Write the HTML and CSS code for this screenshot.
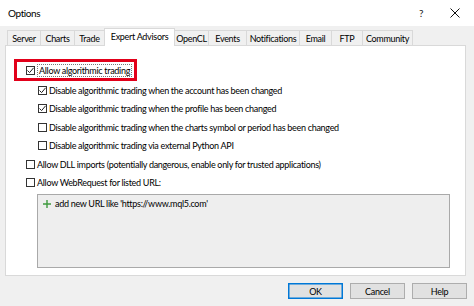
FILE: index.html
```html
<!DOCTYPE html>
<html>
<head>
<meta charset="utf-8">
<link rel="stylesheet" href="styles.css">
</head>
<body>
<div class="window">
  <div class="titlebar">
    <span class="title">Options</span>
    <div class="caption">
      <span class="cap-btn cap-help">?</span>
      <span class="cap-btn"><svg width="10" height="10" viewBox="0 0 10 10"><path d="M0.5 0.5L9.5 9.5M9.5 0.5L0.5 9.5" stroke="#111" stroke-width="1" fill="none"/></svg></span>
    </div>
  </div>
  <div class="main">
    <div class="tabs">
      <div class="tab">Server</div>
      <div class="tab">Charts</div>
      <div class="tab">Trade</div>
      <div class="tab active">Expert Advisors</div>
      <div class="tab">OpenCL</div>
      <div class="tab">Events</div>
      <div class="tab">Notifications</div>
      <div class="tab">Email</div>
      <div class="tab">FTP</div>
      <div class="tab">Community</div>
    </div>
    <div class="panel">
      <div class="highlight">
        <div class="row">
          <span class="cb"><svg width="9" height="9" viewBox="0 0 9 9"><path d="M1.5 4.5L3.6 6.6L7.6 1.8" stroke="#222" stroke-width="1" fill="none"/></svg></span>
          <span class="label focus">Allow algorithmic trading</span>
        </div>
      </div>
      <div class="row sub">
        <span class="cb"><svg width="9" height="9" viewBox="0 0 9 9"><path d="M1.5 4.5L3.6 6.6L7.6 1.8" stroke="#222" stroke-width="1" fill="none"/></svg></span>
        <span class="label">Disable algorithmic trading when the account has been changed</span>
      </div>
      <div class="row sub">
        <span class="cb"><svg width="9" height="9" viewBox="0 0 9 9"><path d="M1.5 4.5L3.6 6.6L7.6 1.8" stroke="#222" stroke-width="1" fill="none"/></svg></span>
        <span class="label">Disable algorithmic trading when the profile has been changed</span>
      </div>
      <div class="row sub">
        <span class="cb"></span>
        <span class="label">Disable algorithmic trading when the charts symbol or period has been changed</span>
      </div>
      <div class="row sub">
        <span class="cb"></span>
        <span class="label">Disable algorithmic trading via external Python API</span>
      </div>
      <div class="row top">
        <span class="cb"></span>
        <span class="label">Allow DLL imports (potentially dangerous, enable only for trusted applications)</span>
      </div>
      <div class="row top">
        <span class="cb"></span>
        <span class="label">Allow WebRequest for listed URL:</span>
      </div>
      <div class="urlbox">
        <div class="url-row">
          <svg class="plus" width="8" height="8" viewBox="0 0 8 8"><path d="M4 0V8M0 4H8" stroke="#3f9b3f" stroke-width="1.4" fill="none"/></svg>
          <span>add new URL like 'https://www.mql5.com'</span>
        </div>
      </div>
    </div>
    <div class="buttons">
      <div class="btn default">OK</div>
      <div class="btn">Cancel</div>
      <div class="btn">Help</div>
    </div>
  </div>
</div>
</body>
</html>
```
FILE: styles.css
```css
* { box-sizing: border-box; }
html, body { margin: 0; padding: 0; }
body {
  width: 474px;
  height: 306px;
  overflow: hidden;
  background: #f0f0f0;
  font-family: Lato, "Noto Sans", sans-serif;
  font-size: 9px;
  letter-spacing: -0.3px;
  color: #000;
}
.window { width: 474px; height: 306px; }
.titlebar {
  height: 26px;
  background: #fff;
  display: flex;
  align-items: center;
  justify-content: space-between;
  padding-left: 8px;
  padding-right: 2px;
}
.title { font-size: 10px; letter-spacing: -0.4px; }
.caption { display: flex; align-items: center; height: 100%; }
.cap-btn {
  width: 34px;
  height: 100%;
  display: flex;
  align-items: center;
  justify-content: center;
}
.cap-help { font-size: 10px; color: #222; }
.main { padding: 2px 8px 0 5px; }
.tabs {
  display: flex;
  align-items: flex-end;
  height: 17px;
  margin-left: 2px;
}
.tab {
  height: 15px;
  border: 1px solid #d9d9d9;
  border-bottom: none;
  background: #f0f0f0;
  margin-left: -1px;
  display: flex;
  align-items: center;
  justify-content: center;
  white-space: nowrap;
}
.tab:first-child { margin-left: 0; }
.tab.active {
  height: 18px;
  background: #fff;
  position: relative;
  z-index: 1;
  margin-bottom: -1px;
  align-items: flex-start;
  padding-top: 2px;
}
.tab:nth-child(1) { width: 34px; }
.tab:nth-child(2) { width: 35px; }
.tab:nth-child(3) { width: 31px; }
.tab:nth-child(4) { width: 71px; }
.tab:nth-child(5) { width: 35px; }
.tab:nth-child(6) { width: 39px; }
.tab:nth-child(7) { width: 54px; }
.tab:nth-child(8) { width: 33px; }
.tab:nth-child(9) { width: 32px; }
.tab:nth-child(10) { width: 51px; }
.panel {
  background: #fff;
  border: 1px solid #d9d9d9;
  height: 231px;
  padding: 13px 0 0 8px;
}
.highlight {
  width: 123px;
  height: 22px;
  border: 3px solid #e2001a;
  padding-left: 9px;
  display: flex;
  align-items: center;
}
.row {
  height: 18.5px;
  display: flex;
  align-items: center;
  white-space: nowrap;
}
.highlight .row { height: 16px; }
.row.sub { padding-left: 24px; }
.row.top { padding-left: 12px; }
.cb {
  width: 9px;
  height: 9px;
  border: 1px solid #333;
  background: #fff;
  flex: none;
  position: relative;
  margin-right: 2px;
}
.cb svg { position: absolute; left: -1px; top: -1px; }
.label { line-height: 11px; }
.label.focus { outline: 1px dotted #777; outline-offset: 0; padding: 0 1px; margin-left: 1px; }
.urlbox {
  margin: 2px 0 0 23px;
  width: 413px;
  height: 74px;
  background: #eeeeee;
  border: 1px solid #a9a9a9;
  padding-left: 5px;
}
.url-row {
  height: 17px;
  display: flex;
  align-items: center;
  gap: 4px;
}
.plus { flex: none; }
.buttons {
  display: flex;
  justify-content: flex-end;
  gap: 7px;
  margin-top: 7px;
  margin-right: -1px;
}
.btn {
  width: 55px;
  height: 16px;
  border: 1px solid #adadad;
  background: #e1e1e1;
  display: flex;
  align-items: center;
  justify-content: center;
}
.btn.default { border-color: #0078d7; box-shadow: inset 0 0 0 0.5px #0078d7; }
```
